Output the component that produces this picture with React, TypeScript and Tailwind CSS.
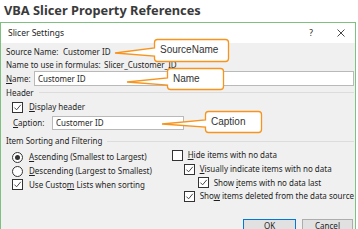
import React from 'react';

const font = { fontFamily: '"Noto Sans", "Open Sans", sans-serif' };

const Check: React.FC<{ checked?: boolean }> = ({ checked }) => (
    <span className="w-[11px] h-[11px] border border-[#333333] bg-white flex items-center justify-center shrink-0">
        {checked && (
            <svg width="9" height="9" viewBox="0 0 9 9">
                <path d="M1.4 4.6 L3.6 6.8 L7.8 1.8" fill="none" stroke="#333333" strokeWidth="0.9" />
            </svg>
        )}
    </span>
);

const Radio: React.FC<{ checked?: boolean }> = ({ checked }) => (
    <span className="w-[11px] h-[11px] rounded-full border border-[#333333] bg-white flex items-center justify-center shrink-0">
        {checked && <span className="w-[5px] h-[5px] rounded-full bg-[#333333]" />}
    </span>
);

// callout shape: box + wedge pointing left
const calloutPath = (x0: number, y0: number, x1: number, y1: number, tx: number, ty: number, wa: number, wb: number) => {
    const r = 3;
    return `M${x0 + r},${y0} H${x1 - r} Q${x1},${y0} ${x1},${y0 + r} V${y1 - r} Q${x1},${y1} ${x1 - r},${y1} H${x0 + r} Q${x0},${y1} ${x0},${y1 - r} V${wb} L${tx},${ty} L${x0},${wa} V${y0 + r} Q${x0},${y0} ${x0 + r},${y0} Z`;
};

const App: React.FC = () => {
    return (
        <div className="relative w-[358px] h-[229px] bg-white overflow-hidden text-[#1e1e1e] whitespace-nowrap" style={font}>
            <div className="h-[22px] pl-[4px] flex items-center text-[12.8px] font-bold text-[#3a3a3a]">
                VBA Slicer Property References
            </div>

            <div className="w-[356px] h-[207px] border border-[#7fbf7f] flex flex-col text-[8px]">
                {/* title bar */}
                <div className="h-[20px] bg-white flex items-center pl-[7px] pr-[10px] text-[8.5px] shrink-0">
                    <span>Slicer Settings</span>
                    <span className="ml-auto mr-[24px]">?</span>
                    <svg width="8" height="8" viewBox="0 0 8 8">
                        <path d="M0.5 0.5 L7.5 7.5 M7.5 0.5 L0.5 7.5" stroke="#333333" strokeWidth="0.9" />
                    </svg>
                </div>

                <div className="flex-1 bg-[#f0f0f0] pl-[5px] pr-[1px] pt-[2px] flex flex-col">
                    <div className="h-[14px] flex items-center">
                        <span className="w-[57px]">Source Name:</span>
                        <span>Customer ID</span>
                    </div>
                    <div className="h-[12px] flex items-center">
                        <span className="w-[98px]">Name to use in formulas:</span>
                        <span>Slicer_Customer_ID</span>
                    </div>
                    <div className="h-[15px] flex items-center">
                        <span className="w-[28px]"><u>N</u>ame:</span>
                        <div className="flex-1 h-[15px] bg-white border border-[#b9b9b9] flex items-center pl-[3px]">Customer ID</div>
                    </div>
                    <div className="h-[13px] flex items-center gap-[5px]">
                        <span>Header</span>
                        <div className="flex-1 h-px bg-[#dcdcdc]" />
                    </div>
                    <div className="h-[14px] mt-[1px] flex items-center pl-[6px] gap-[6px]">
                        <Check checked />
                        <span><u>D</u>isplay header</span>
                    </div>
                    <div className="h-[14px] mt-[2px] flex items-center pl-[7px]">
                        <span className="w-[39px]"><u>C</u>aption:</span>
                        <div className="w-[132px] h-[14px] bg-white border border-[#b9b9b9] flex items-center pl-[3px]">Customer ID</div>
                    </div>
                    <div className="h-[14px] mt-[4px] flex items-center gap-[5px]">
                        <span>Item Sorting and Filtering</span>
                        <div className="flex-1 h-px bg-[#dcdcdc]" />
                    </div>

                    <div className="flex">
                        <div className="w-[170px] pl-[6px] pt-[2px] flex flex-col">
                            <div className="h-[14px] flex items-center gap-[6px]">
                                <Radio checked />
                                <span><u>A</u>scending (Smallest to Largest)</span>
                            </div>
                            <div className="h-[14px] flex items-center gap-[6px]">
                                <Radio />
                                <span><u>D</u>escending (Largest to Smallest)</span>
                            </div>
                            <div className="h-[13px] flex items-center gap-[6px]">
                                <Check checked />
                                <span>Use Custo<u>m</u> Lists when sorting</span>
                            </div>
                        </div>
                        <div className="flex-1 flex flex-col">
                            <div className="h-[14px] flex items-center gap-[5px]">
                                <Check />
                                <span><u>H</u>ide items with no data</span>
                            </div>
                            <div className="h-[14px] flex items-center gap-[5px] pl-[12px]">
                                <Check checked />
                                <span><u>V</u>isually indicate items with no data</span>
                            </div>
                            <div className="h-[13px] flex items-center gap-[5px] pl-[26px]">
                                <Check checked />
                                <span>Show <u>i</u>tems with no data last</span>
                            </div>
                            <div className="h-[14px] flex items-center gap-[5px] pl-[12px]">
                                <Check checked />
                                <span>Sho<u>w</u> items deleted from the data source</span>
                            </div>
                        </div>
                    </div>

                    <div className="mt-[16px] flex justify-end gap-[6px] pr-[1px]">
                        <div className="w-[53px] h-[18px] bg-[#e1e1e1] border border-[#0078d7] flex items-start justify-center leading-[10px] pt-[1px]">OK</div>
                        <div className="w-[51px] h-[18px] bg-[#e1e1e1] border border-[#adadad] flex items-start justify-center leading-[10px] pt-[1px]">Cancel</div>
                    </div>
                </div>
            </div>

            {/* callouts */}
            <svg className="absolute left-0 top-0" width="358" height="229" viewBox="0 0 358 229">
                <path d={calloutPath(154.5, 39.5, 228.5, 61.5, 115, 53, 48, 56)} fill="white" stroke="#f7941d" strokeWidth="1.3" />
                <path d={calloutPath(167.5, 68.5, 223.5, 89.5, 127, 82, 78, 85)} fill="white" stroke="#f7941d" strokeWidth="1.3" />
                <path d={calloutPath(205.5, 111.5, 261.5, 132.5, 162, 124, 120, 127)} fill="white" stroke="#f7941d" strokeWidth="1.3" />
            </svg>
            <span className="absolute left-[160px] top-[43px] text-[10px] leading-[13px] text-[#333333]" style={{ fontFamily: '"Liberation Sans", Arial, sans-serif' }}>SourceName</span>
            <span className="absolute left-[173px] top-[72px] text-[10px] leading-[13px] text-[#333333]" style={{ fontFamily: '"Liberation Sans", Arial, sans-serif' }}>Name</span>
            <span className="absolute left-[211px] top-[115px] text-[10px] leading-[13px] text-[#333333]" style={{ fontFamily: '"Liberation Sans", Arial, sans-serif' }}>Caption</span>
        </div>
    );
};

export default App;
